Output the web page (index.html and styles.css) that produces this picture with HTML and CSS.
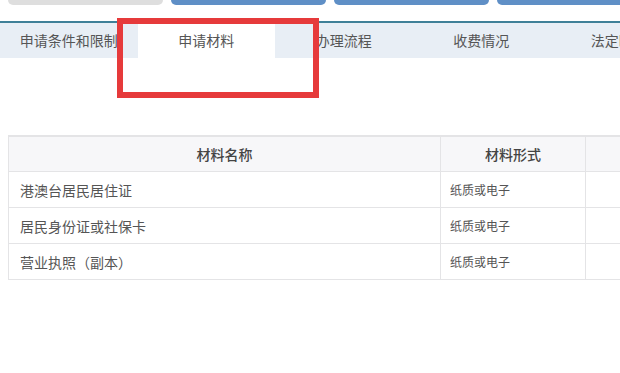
FILE: index.html
```html
<!DOCTYPE html>
<html lang="zh-CN">
<head>
  <meta charset="UTF-8" />
  <meta name="viewport" content="width=device-width, initial-scale=1.0"/>
  <title>申请材料</title>
  <link rel="stylesheet" href="styles.css">
</head>
<body>
  <div class="top-buttons">
    <span class="btn btn-gray"></span>
    <span class="btn btn-blue"></span>
    <span class="btn btn-blue"></span>
    <span class="btn btn-blue"></span>
  </div>

  <div class="tab-area">
    <ul class="tabs">
      <li>申请条件和限制</li>
      <li class="active">申请材料</li>
      <li>办理流程</li>
      <li>收费情况</li>
      <li>法定时限</li>
    </ul>
    <div class="highlight"></div>
  </div>

  <div class="table-wrap">
    <table class="materials">
      <thead>
        <tr>
          <th class="col-name">材料名称</th>
          <th class="col-form">材料形式</th>
          <th class="col-more">材料依据</th>
        </tr>
      </thead>
      <tbody>
        <tr>
          <td>港澳台居民居住证</td>
          <td class="small">纸质或电子</td>
          <td></td>
        </tr>
        <tr>
          <td>居民身份证或社保卡</td>
          <td class="small">纸质或电子</td>
          <td></td>
        </tr>
        <tr>
          <td>营业执照（副本）</td>
          <td class="small">纸质或电子</td>
          <td></td>
        </tr>
      </tbody>
    </table>
  </div>
</body>
</html>
```

FILE: styles.css
```css
body {
  margin: 0;
  font-family: "Noto Sans CJK SC", "Noto Sans", sans-serif;
  background: #fff;
  color: #555;
  width: 620px;
  height: 373px;
  overflow: hidden;
}
.top-buttons {
  display: flex;
  gap: 8px;
  padding-left: 8px;
  height: 5px;
}
.btn {
  flex: 0 0 155px;
  height: 5px;
  border-radius: 0 0 5px 5px;
}
.btn-gray {
  background: #dedede;
}
.btn-blue {
  background: #5f8fc6;
}
.tab-area {
  position: relative;
  margin-top: 16px;
}
.tabs {
  display: flex;
  list-style: none;
  margin: 0;
  padding: 0;
  border-top: 2px solid #3f8098;
  background: #e8eef5;
  width: 700px;
}
.tabs li {
  flex: 0 0 137.5px;
  height: 35px;
  line-height: 35px;
  text-align: center;
  font-size: 14px;
  color: #555;
}
.tabs li.active {
  background: #fff;
}
.highlight {
  position: absolute;
  left: 117px;
  top: -3px;
  width: 190px;
  height: 68px;
  border: 6px solid #e63a3b;
}
.table-wrap {
  margin-top: 77px;
  padding-left: 8px;
  overflow: hidden;
}
.materials {
  border-collapse: collapse;
  width: 700px;
  table-layout: fixed;
  border-top: 2px solid #e4e4e6;
}
.materials th,
.materials td {
  border: 1px solid #e4e4e6;
  font-size: 14px;
  height: 35px;
  padding: 0 0 0 11px;
  text-align: left;
}
.materials th {
  background: #f7f7f9;
  font-weight: 500;
  color: #444;
  text-align: center;
  padding: 0;
  height: 34px;
}
.materials td.small {
  font-size: 12px;
  padding-left: 9px;
}
.col-name {
  width: 431px;
}
.col-form {
  width: 144px;
}
.col-more {
  width: 125px;
}
```
